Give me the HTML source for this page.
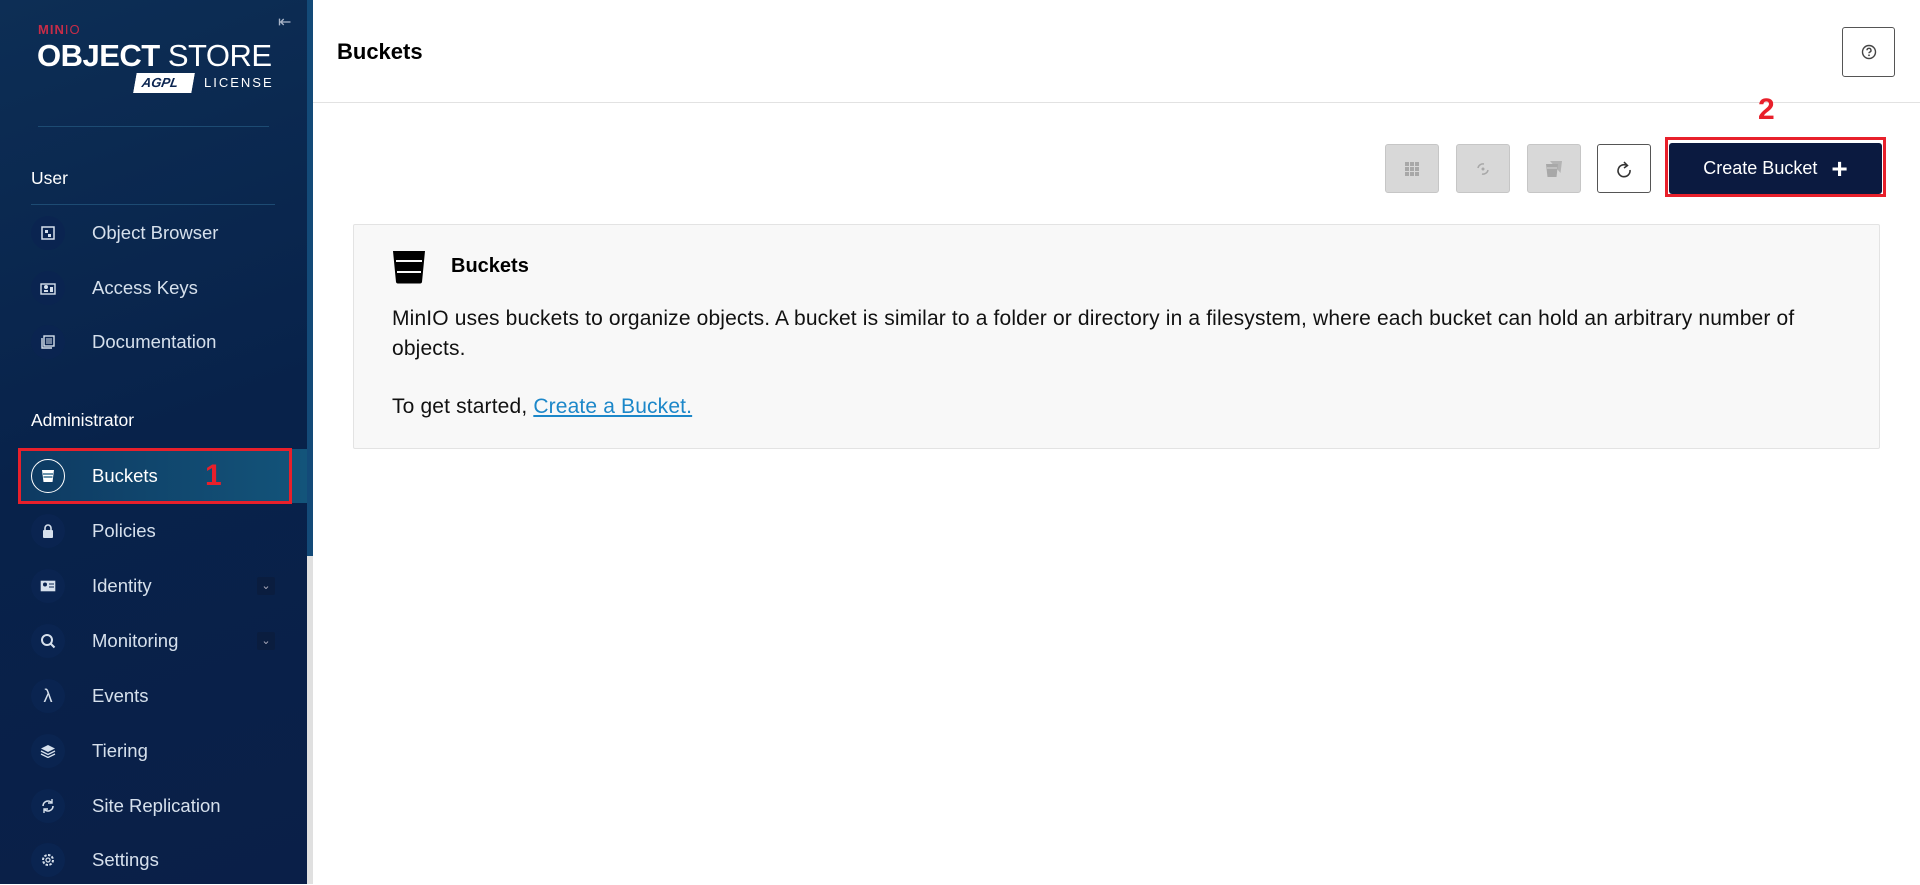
<!DOCTYPE html>
<html><head><meta charset="utf-8"><style>
*{box-sizing:border-box;margin:0;padding:0}
body{width:1920px;height:884px;overflow:hidden;font-family:"Liberation Sans",sans-serif;background:#fff;position:relative}
#sb{position:absolute;left:0;top:0;width:307px;height:884px;background:linear-gradient(160deg,#0d2e55 0%,#08224a 50%,#0a1f48 100%);color:#fff}
#strip{position:absolute;left:307px;top:0;width:6px;height:884px;background:#e0e0e0}
#strip div{height:556px;background:#134a78}
.ab{position:absolute}
.sec{position:absolute;left:31px;font-size:17.5px;color:#fff}
.item{position:absolute;left:0;width:307px;height:50px}
.item .ic{position:absolute;left:31px;top:8px;width:34px;height:34px;border-radius:50%;background:#0a2450;display:flex;align-items:center;justify-content:center}
.item .tx{position:absolute;left:92px;top:14px;font-size:18.5px;color:#d6e0ec}
.chev{position:absolute;left:257px;top:16px;width:18px;height:18px;background:#0a1d3f;border-radius:2px;color:#aab;font-size:11px;text-align:center;line-height:18px}
.btn{position:absolute;top:144px;width:54px;height:49px;border-radius:3px;border:1px solid #c6c6c6;background:#d8d8d8;display:flex;align-items:center;justify-content:center}
.body{font-size:21px;letter-spacing:0.15px;color:#111}
</style></head><body>
<div id="sb">
 <div class="ab" style="left:38px;top:22px;font-size:13px;font-weight:bold;color:#c72c48;letter-spacing:1px">MIN<span style="font-weight:normal">IO</span></div>
 <div class="ab" style="left:37px;top:38px;font-size:31px;color:#fff;letter-spacing:-0.5px;white-space:nowrap"><b>OBJECT</b> <span style="font-weight:normal">STORE</span></div>
 <div class="ab" style="left:135px;top:73px;width:58px;height:20px;border:1px solid #fff;background:#fff;color:#0a2450;font-size:13px;font-style:italic;font-weight:bold;line-height:17px;padding-left:6px;transform:skewX(-10deg)">AGPL</div>
 <div class="ab" style="left:204px;top:75px;font-size:13px;color:#fff;letter-spacing:2px">LICENSE</div>
 <div class="ab" style="left:278px;top:12px;font-size:16px;color:#aab5c8">⇤</div>
 <div class="ab" style="left:38px;top:126px;width:231px;height:1px;background:#1d4b73"></div>
 <div class="sec" style="top:168px">User</div>
 <div class="ab" style="left:31px;top:204px;width:244px;height:1px;background:#1d4b73"></div>
 <div class="item" style="top:208px"><div class="ic"><svg width="14" height="14" viewBox="0 0 14 14"><rect x="1" y="1" width="12" height="12" fill="none" stroke="#d6e0ec" stroke-width="1.5"/><rect x="4" y="4" width="3" height="3" fill="#d6e0ec"/><rect x="7" y="8" width="3" height="3" fill="#d6e0ec"/></svg></div><div class="tx">Object Browser</div></div>
 <div class="item" style="top:263px"><div class="ic"><svg width="16" height="14" viewBox="0 0 16 14"><rect x="1" y="3" width="14" height="10" fill="none" stroke="#d6e0ec" stroke-width="1.4"/><circle cx="6" cy="6" r="2" fill="#d6e0ec"/><rect x="4" y="9" width="4" height="2" fill="#d6e0ec"/><rect x="10" y="6" width="3" height="5" fill="#d6e0ec"/></svg></div><div class="tx">Access Keys</div></div>
 <div class="item" style="top:317px"><div class="ic"><svg width="14" height="14" viewBox="0 0 14 14"><rect x="3" y="1" width="10" height="10" fill="none" stroke="#d6e0ec" stroke-width="1.4"/><path d="M1 3v10h10" fill="none" stroke="#d6e0ec" stroke-width="1.4"/><path d="M5 4h6M5 6h6M5 8h6" stroke="#d6e0ec"/></svg></div><div class="tx">Documentation</div></div>
 <div class="sec" style="top:410px">Administrator</div>
 <div class="ab" style="left:20px;top:449px;width:287px;height:54px;background:linear-gradient(90deg,#0e3a62,#13547a)"></div>
 <div class="ab" style="left:18px;top:448px;width:274px;height:56px;border:3px solid #e8202b"></div>
 <div class="item" style="top:451px"><div class="ic" style="background:transparent;border:1.5px solid #fff"><svg width="14" height="14" viewBox="0 0 14 14"><path d="M1 1h12l-1.5 12h-9z" fill="#fff"/><path d="M2 5h10M2.5 8h9" stroke="#13547a" stroke-width="1.3"/></svg></div><div class="tx" style="color:#fff">Buckets</div></div>
 <div class="ab" style="left:205px;top:459px;font-size:30px;font-weight:bold;color:#e8202b">1</div>
 <div class="item" style="top:506px"><div class="ic"><svg width="12" height="14" viewBox="0 0 12 14"><path d="M3 6V4a3 3 0 0 1 6 0v2" fill="none" stroke="#d6e0ec" stroke-width="1.6"/><rect x="1" y="6" width="10" height="8" rx="1" fill="#d6e0ec"/></svg></div><div class="tx">Policies</div></div>
 <div class="item" style="top:561px"><div class="ic"><svg width="16" height="12" viewBox="0 0 16 12"><rect x="0.7" y="0.7" width="14.6" height="10.6" fill="#d6e0ec"/><circle cx="5" cy="4.5" r="2" fill="#0a2450"/><path d="M9 4h5M9 7h5" stroke="#0a2450"/></svg></div><div class="tx">Identity</div><div class="chev">⌄</div></div>
 <div class="item" style="top:616px"><div class="ic"><svg width="16" height="16" viewBox="0 0 16 16"><circle cx="7" cy="7" r="5" fill="none" stroke="#d6e0ec" stroke-width="2"/><path d="M10.5 10.5l4 4" stroke="#d6e0ec" stroke-width="2"/></svg></div><div class="tx">Monitoring</div><div class="chev">⌄</div></div>
 <div class="item" style="top:671px"><div class="ic" style="color:#d6e0ec;font-size:18px">λ</div><div class="tx">Events</div></div>
 <div class="item" style="top:726px"><div class="ic"><svg width="16" height="14" viewBox="0 0 16 14"><path d="M8 1l7 3.5-7 3.5-7-3.5z" fill="#d6e0ec"/><path d="M1 7l7 3.5 7-3.5M1 10l7 3.5 7-3.5" fill="none" stroke="#d6e0ec" stroke-width="1.3"/></svg></div><div class="tx">Tiering</div></div>
 <div class="item" style="top:781px"><div class="ic"><svg width="16" height="16" viewBox="0 0 16 16"><path d="M3 8a5 5 0 0 1 9-3M13 8a5 5 0 0 1-9 3" fill="none" stroke="#d6e0ec" stroke-width="1.6"/><path d="M12 1v4H8M4 15v-4h4" fill="none" stroke="#d6e0ec" stroke-width="1.4"/></svg></div><div class="tx">Site Replication</div></div>
 <div class="item" style="top:835px"><div class="ic"><svg width="16" height="16" viewBox="0 0 16 16"><circle cx="8" cy="8" r="5" fill="none" stroke="#d6e0ec" stroke-width="2" stroke-dasharray="2.5 1.4"/><circle cx="8" cy="8" r="2" fill="none" stroke="#d6e0ec" stroke-width="1.3"/></svg></div><div class="tx">Settings</div></div>
</div>
<div id="strip"><div></div></div>

<div class="ab" style="left:313px;top:102px;width:1607px;height:1px;background:#e2e2e2"></div>
<div class="ab" style="left:337px;top:39px;font-size:22px;font-weight:bold;color:#000">Buckets</div>
<div class="ab" style="left:1842px;top:27px;width:53px;height:50px;border:1px solid #555;border-radius:3px;display:flex;align-items:center;justify-content:center"><svg width="16" height="16" viewBox="0 0 16 16"><circle cx="8" cy="8" r="6.5" fill="none" stroke="#444" stroke-width="1.4"/><path d="M6 6.3a2 2 0 1 1 2.6 1.9c-.5.2-.6.5-.6 1.1" fill="none" stroke="#444" stroke-width="1.4"/><circle cx="8" cy="11.3" r=".9" fill="#444"/></svg></div>

<div class="btn" style="left:1385px"><svg width="16" height="16" viewBox="0 0 16 16" fill="#a8a8a8"><rect x="1" y="1" width="4" height="4"/><rect x="6" y="1" width="4" height="4"/><rect x="11" y="1" width="4" height="4"/><rect x="1" y="6" width="4" height="4"/><rect x="6" y="6" width="4" height="4"/><rect x="11" y="6" width="4" height="4"/><rect x="1" y="11" width="4" height="4"/><rect x="6" y="11" width="4" height="4"/><rect x="11" y="11" width="4" height="4"/></svg></div>
<div class="btn" style="left:1456px"><svg width="16" height="16" viewBox="0 0 16 16"><path d="M3 7a5 5 0 0 1 6-4M13 9a5 5 0 0 1-6 4" fill="none" stroke="#a8a8a8" stroke-width="1.5"/><circle cx="8" cy="8" r="1.5" fill="#a8a8a8"/></svg></div>
<div class="btn" style="left:1527px"><svg width="20" height="18" viewBox="0 0 20 18"><path d="M6 1h12l-1.5 12z" fill="#b4b4b4"/><path d="M2 4h12l-1.5 13h-9z" fill="#a8a8a8"/><path d="M3 8h10" stroke="#d8d8d8"/></svg></div>
<div class="btn" style="left:1597px;background:#fff;border-color:#555"><svg width="16" height="18" viewBox="0 0 16 18"><path d="M11 5.5A6 6 0 1 0 14 10" fill="none" stroke="#333" stroke-width="1.6"/><path d="M8 2l3.5 3.5L8 8" fill="none" stroke="#333" stroke-width="1.5"/></svg></div>
<div class="ab" style="left:1665px;top:137px;width:221px;height:60px;border:3px solid #e8202b"></div>
<div class="ab" style="left:1669px;top:143px;width:213px;height:51px;background:#0b1a40;border-radius:3px;color:#fff;font-size:18px;display:flex;align-items:center;justify-content:center;gap:14px">Create Bucket <span style="font-size:28px;font-weight:bold;line-height:20px">+</span></div>
<div class="ab" style="left:1758px;top:93px;font-size:30px;font-weight:bold;color:#e8202b">2</div>

<div class="ab" style="left:353px;top:224px;width:1527px;height:225px;background:#f8f8f8;border:1px solid #e3e3e3;border-radius:2px"></div>
<svg class="ab" style="left:392px;top:250px" width="34" height="34" viewBox="0 0 34 34"><path d="M1 1h32l-3 31a2 2 0 0 1-2 1.5H6a2 2 0 0 1-2-1.5z" fill="#000"/><path d="M4 11h26M5 22h24" stroke="#f8f8f8" stroke-width="2"/></svg>
<div class="ab" style="left:451px;top:255px;font-size:20px;font-weight:bold;color:#000">Buckets</div>
<div class="ab body" style="left:392px;top:304px;width:1430px;line-height:30px">MinIO uses buckets to organize objects. A bucket is similar to a folder or directory in a filesystem, where each bucket can hold an arbitrary number of objects.</div>
<div class="ab body" style="left:392px;top:395px">To get started, <span style="color:#1c87c9;text-decoration:underline">Create a Bucket.</span></div>
</body></html>
